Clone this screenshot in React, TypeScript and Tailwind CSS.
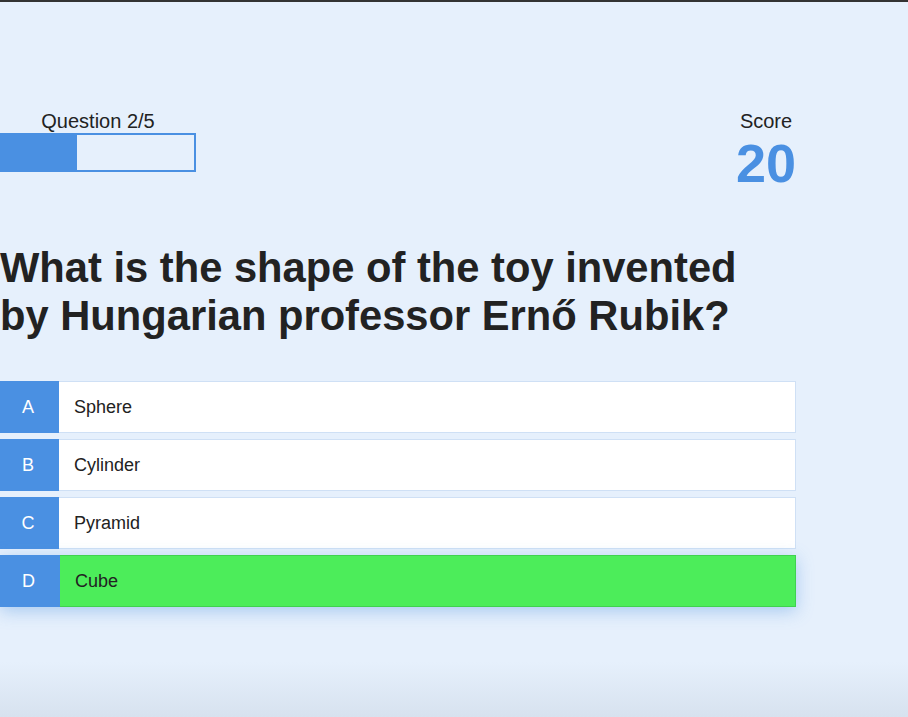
import React from "react";

const options = [
  { letter: "A", text: "Sphere", selected: false },
  { letter: "B", text: "Cylinder", selected: false },
  { letter: "C", text: "Pyramid", selected: false },
  { letter: "D", text: "Cube", selected: true },
];

export default function App() {
  return (
    <div
      className="min-h-[717px] flex flex-col bg-[#e6f0fc] border-t-2 border-[#333333] text-[#222222]"
      style={{ fontFamily: '"Liberation Sans", Arial, sans-serif' }}
    >
      <div className="w-[796px] pt-[108px] flex flex-col">
        <div className="flex justify-between items-start">
          <div className="flex flex-col items-center w-[196px]">
            <div className="text-[20px] leading-[23px]">Question 2/5</div>
            <div className="w-[196px] h-[39px] border-2 border-[#4a90e2] flex">
              <div className="w-[75px] h-full bg-[#4a90e2]" />
            </div>
          </div>
          <div className="flex flex-col items-center w-[60px]">
            <div className="text-[20px] leading-[23px]">Score</div>
            <div className="mt-[3px] text-[54px] leading-[54px] font-bold text-[#4a90e2]">20</div>
          </div>
        </div>

        <h1 className="mt-[54px] text-[41.7px] leading-[48px] font-bold text-[#222222]">
          What is the shape of the toy invented
          <br />
          by Hungarian professor Ernő Rubik?
        </h1>

        <div className="mt-[41px] flex flex-col gap-[6px]">
          {options.map((o) =>
            o.selected ? (
              <div
                key={o.letter}
                className="flex h-[52px] bg-[#4ced5a] border border-[#3fd24f] shadow-[0_4px_16px_rgba(74,144,226,0.4)]"
              >
                <div className="w-[60px] -my-px -ml-px pr-[3px] flex items-center justify-center bg-[#4a90e2] text-white text-[18px]">
                  {o.letter}
                </div>
                <div className="flex items-center pl-[15px] text-[18px]">{o.text}</div>
              </div>
            ) : (
              <div
                key={o.letter}
                className="flex h-[52px] bg-white border border-[#cfe0f5]"
              >
                <div className="w-[59px] -my-px -ml-px pr-[3px] flex items-center justify-center bg-[#4a90e2] text-white text-[18px]">
                  {o.letter}
                </div>
                <div className="flex items-center pl-[15px] text-[18px]">{o.text}</div>
              </div>
            )
          )}
        </div>
      </div>
      <div className="mt-auto h-[55px] bg-gradient-to-b from-[#e6f0fc] to-[#d7e2ef]" />
    </div>
  );
}
